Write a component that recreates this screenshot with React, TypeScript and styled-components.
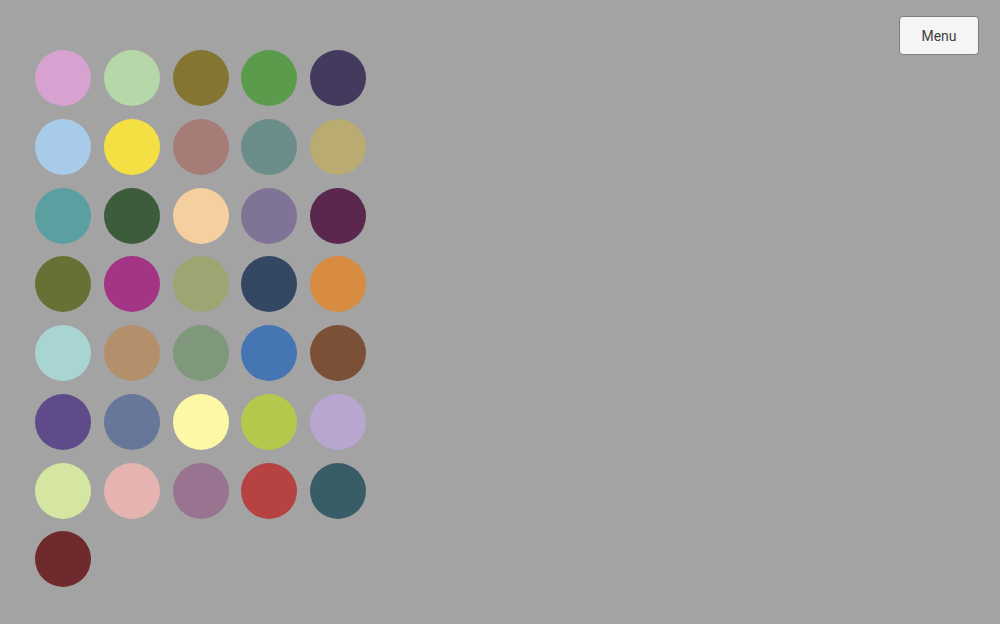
import styled, { createGlobalStyle } from "styled-components";

const COLORS: string[] = [
  "#d8a2d0", "#b6d7a8", "#857533", "#5b9c4c", "#443a5e",
  "#a8cbe9", "#f5e043", "#a87c76", "#6a8d8a", "#b9ab72",
  "#5aa0a0", "#3d5c3b", "#f5cfa0", "#807496", "#5c274d",
  "#667235", "#a43584", "#9ba673", "#354863", "#d78c42",
  "#a8d4d2", "#b38f6c", "#7f977b", "#4675b3", "#7b5036",
  "#5f4b8a", "#677799", "#fdf8a6", "#b3c94c", "#b8a6d0",
  "#d4e6a1", "#e6b4b0", "#987490", "#b64242", "#395d66",
  "#6e2a2c",
];

const GlobalStyle = createGlobalStyle`
  html, body {
    margin: 0;
    padding: 0;
    background: #a3a3a3;
    font-family: Roboto, "Liberation Sans", sans-serif;
  }
`;

const Page = styled.div`
  position: relative;
  width: 1000px;
  height: 624px;
  box-sizing: border-box;
  padding: 50px 0 0 35px;
  background: #a3a3a3;
  overflow: hidden;
`;

const Swatches = styled.div`
  display: grid;
  grid-template-columns: repeat(5, 56px);
  grid-auto-rows: 56px;
  column-gap: 12.75px;
  row-gap: 12.75px;
`;

const Dot = styled.div<{ $color: string }>`
  width: 56px;
  height: 56px;
  border-radius: 50%;
  background: ${(p) => p.$color};
`;

const MenuButton = styled.button`
  position: absolute;
  top: 16px;
  right: 21px;
  width: 80px;
  height: 39px;
  box-sizing: border-box;
  background: #f5f5f5;
  border: 1px solid #7c7c7c;
  border-radius: 4px;
  font-family: Roboto, "Liberation Sans", sans-serif;
  font-size: 14px;
  color: #3d3d3d;
  cursor: pointer;
`;

export default function App() {
  return (
    <>
      <GlobalStyle />
      <Page>
        <Swatches>
          {COLORS.map((c, i) => (
            <Dot key={i} $color={c} />
          ))}
        </Swatches>
        <MenuButton>Menu</MenuButton>
      </Page>
    </>
  );
}
